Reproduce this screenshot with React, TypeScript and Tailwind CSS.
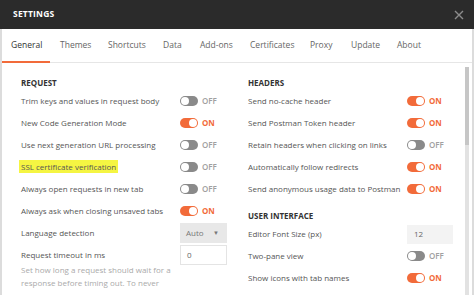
import React from 'react';

const tabs: [string, number][] = [
  ['General', 48],
  ['Themes', 48],
  ['Shortcuts', 55],
  ['Data', 37],
  ['Add-ons', 50],
  ['Certificates', 60],
  ['Proxy', 41],
  ['Update', 46],
  ['About', 60],
];

const tabW: Record<number, string> = {
  37: 'w-[37px]',
  41: 'w-[41px]',
  46: 'w-[46px]',
  48: 'w-[48px]',
  50: 'w-[50px]',
  55: 'w-[55px]',
  60: 'w-[60px]',
};

function Toggle({ on }: { on: boolean }) {
  return (
    <div className="flex items-center gap-[4px]">
      {on ? (
        <div className="w-[18px] h-[10px] rounded-full bg-[#f26b3a] flex items-center justify-end pr-[1px]">
          <div className="w-[8px] h-[8px] rounded-full bg-white" />
        </div>
      ) : (
        <div className="w-[18px] h-[10px] rounded-full bg-[#8a8a8a] flex items-center pl-[1px]">
          <div className="w-[8px] h-[8px] rounded-full bg-white" />
        </div>
      )}
      <span className={on ? 'text-[8px] font-bold text-[#f26b3a]' : 'text-[8px] font-semibold text-[#a0a0a0]'}>
        {on ? 'ON' : 'OFF'}
      </span>
    </div>
  );
}

function Row({ label, children, mark }: { label: string; children: React.ReactNode; mark?: boolean }) {
  return (
    <div className="flex items-center h-[22px]">
      <div className="w-[159px] shrink-0 whitespace-nowrap">
        <span className={mark ? 'bg-[#f5f542] px-[2px] -mx-[2px] py-[1px]' : ''}>{label}</span>
      </div>
      {children}
    </div>
  );
}

function Heading({ text, className = '' }: { text: string; className?: string }) {
  return <div className={'h-[14px] flex items-center text-[8px] font-bold text-[#333] ' + className}>{text}</div>;
}

export default function App() {
  return (
    <div className="w-[474px] h-[295px] overflow-hidden bg-white text-[8px] text-[#555]" style={{ fontFamily: '"Open Sans", sans-serif' }}>
      {/* タイトルバー */}
      <div className="h-[29px] bg-[#2b2b2b] flex items-center justify-between pl-[13px] pr-[10px]">
        <span className="text-white text-[8.5px] font-bold tracking-[0.2px]">SETTINGS</span>
        <svg width="10" height="10" viewBox="0 0 10 10" className="text-[#8c8c8c]">
          <path d="M1 1L9 9M9 1L1 9" stroke="currentColor" strokeWidth="1.4" />
        </svg>
      </div>

      <div className="flex h-[266px]">
        <div className="w-[2px] bg-[#dcdcdc]" />
        <div className="flex-1 flex flex-col">
          {/* タブ */}
          <div className="h-[34px] flex items-end border-b border-[#e6e6e6] text-[8.5px] text-[#666]">
            {tabs.map(([t, w], i) => (
              <div
                key={t}
                className={
                  (i === 0
                    ? 'h-full flex items-center pl-[9px] border-b-2 border-[#f26b3a] text-[#333] -mb-[1px] '
                    : 'h-full flex items-center pl-[10px] ') + tabW[w]
                }
              >
                {t}
              </div>
            ))}
          </div>

          <div className="flex flex-1">
            <div className="flex-1 grid grid-cols-2 gap-[10px] pl-[19px] pt-[13px]">
              {/* 左カラム */}
              <div>
                <Heading text="REQUEST" />
                <Row label="Trim keys and values in request body"><Toggle on={false} /></Row>
                <Row label="New Code Generation Mode"><Toggle on /></Row>
                <Row label="Use next generation URL processing"><Toggle on={false} /></Row>
                <Row label="SSL certificate verification" mark><Toggle on={false} /></Row>
                <Row label="Always open requests in new tab"><Toggle on={false} /></Row>
                <Row label="Always ask when closing unsaved tabs"><Toggle on /></Row>
                <Row label="Language detection">
                  <div className="w-[47px] h-[20px] bg-[#e8e8e8] flex items-center justify-between pl-[6px] pr-[8px] text-[#777]">
                    <span>Auto</span>
                    <span className="text-[6px]">▼</span>
                  </div>
                </Row>
                <div className="flex items-start">
                  <div className="w-[159px] shrink-0">
                    <div className="h-[22px] flex items-center">Request timeout in ms</div>
                    <div className="-mt-[3px] leading-[13px] text-[#aaa] whitespace-nowrap">
                      <div>Set how long a request should wait for a</div>
                      <div>response before timing out. To never</div>
                    </div>
                  </div>
                  <div className="mt-[1px] w-[47px] h-[20px] border border-[#e4e4e4] flex items-center pl-[6px] text-[#666]">0</div>
                </div>
              </div>

              {/* 右カラム */}
              <div>
                <Heading text="HEADERS" />
                <Row label="Send no-cache header"><Toggle on /></Row>
                <Row label="Send Postman Token header"><Toggle on /></Row>
                <Row label="Retain headers when clicking on links"><Toggle on={false} /></Row>
                <Row label="Automatically follow redirects"><Toggle on /></Row>
                <Row label="Send anonymous usage data to Postman"><Toggle on /></Row>
                <Heading text="USER INTERFACE" className="mt-[9px]" />
                <Row label="Editor Font Size (px)">
                  <div className="w-[46px] h-[19px] bg-[#f3f3f3] flex items-center pl-[7px] text-[#666]">12</div>
                </Row>
                <Row label="Two-pane view"><Toggle on={false} /></Row>
                <Row label="Show icons with tab names"><Toggle on /></Row>
              </div>
            </div>
            {/* スクロールバー */}
            <div className="w-[6px] mr-[1px] pt-[4px]">
              <div className="w-[4px] h-full bg-[#e2e2e2]">
                <div className="w-[4px] h-[78px] bg-[#c6c6c6]" />
              </div>
            </div>
          </div>
        </div>
        <div className="w-[2px] bg-[#dcdcdc]" />
      </div>
    </div>
  );
}
